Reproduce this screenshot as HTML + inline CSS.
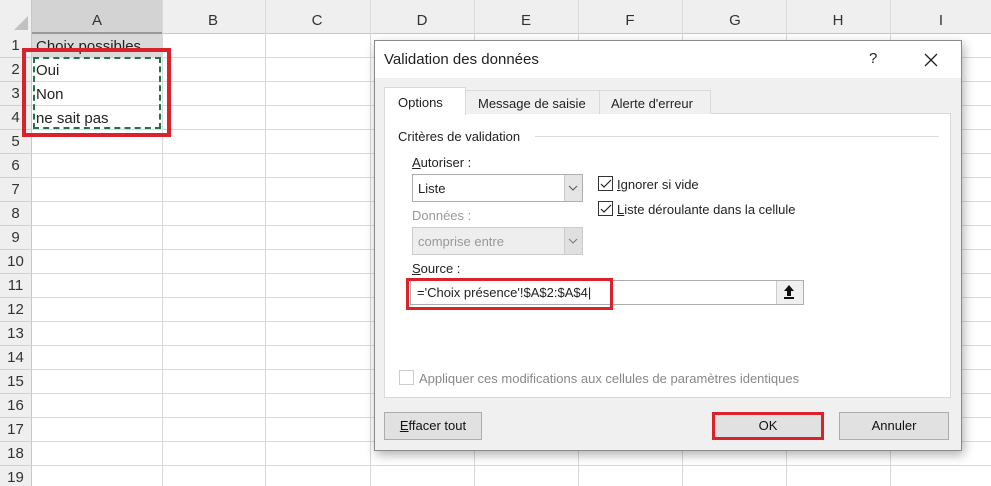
<!DOCTYPE html>
<html><head><meta charset="utf-8"><style>
*{margin:0;padding:0;box-sizing:border-box}
body{width:991px;height:486px;overflow:hidden;background:#fff;font-family:"Liberation Sans",sans-serif;position:relative}
.a{position:absolute}
.hdr{background:#efefef}
.cl{position:absolute;top:0;width:1px;height:486px;background:#d9d9d9}
.ch{position:absolute;top:12px;font-size:15px;color:#333;text-align:center;width:20px}
.rn{position:absolute;left:0;width:31px;text-align:center;font-size:15px;color:#333}
.t{font-size:13px;color:#222;position:absolute;white-space:nowrap}
.btn{position:absolute;background:#e1e1e1;border:1px solid #adadad;font-size:13px;text-align:center;line-height:26px;color:#111}
.cb{position:absolute;width:15px;height:15px;border:1px solid #333;background:#fff}
</style></head><body>
<!-- header -->
<div class="a hdr" style="left:0;top:0;width:991px;height:34px;border-bottom:1px solid #c8c8c8"></div>
<div class="a hdr" style="left:0;top:0;width:32px;height:486px;border-right:1px solid #c8c8c8"></div>
<div class="a" style="left:32px;top:0;width:130px;height:34px;background:#d3d3d3;border-bottom:2px solid #9a9a9a"></div>
<svg class="a" style="left:12px;top:14px" width="18" height="18"><polygon points="16,2 16,16 2,16" fill="#c2c2c2"/></svg>
<!-- rows -->
<div class="a" style="left:32px;top:34px;width:959px;height:452px;background:repeating-linear-gradient(to bottom,transparent 0,transparent 23px,#dadada 23px,#dadada 24px)"></div>
<div class="a" style="left:0;top:34px;width:32px;height:452px;background:repeating-linear-gradient(to bottom,transparent 0,transparent 23px,#d0d0d0 23px,#d0d0d0 24px)"></div>
<div class="cl" style="left:162px"></div><div class="cl" style="left:265px"></div><div class="cl" style="left:370px"></div><div class="cl" style="left:474px"></div><div class="cl" style="left:578px"></div><div class="cl" style="left:682px"></div><div class="cl" style="left:786px"></div><div class="cl" style="left:890px"></div>
<div class="ch" style="left:87px">A</div><div class="ch" style="left:203px">B</div><div class="ch" style="left:307px">C</div><div class="ch" style="left:412px">D</div><div class="ch" style="left:516px">E</div><div class="ch" style="left:620px">F</div><div class="ch" style="left:725px">G</div><div class="ch" style="left:828px">H</div><div class="ch" style="left:931px">I</div>
<div class="a" style="left:32px;top:34px;width:130px;height:23px;background:#d9d9d9"></div>
<div class="rn" style="top:37px">1</div><div class="rn" style="top:61px">2</div><div class="rn" style="top:85px">3</div><div class="rn" style="top:109px">4</div><div class="rn" style="top:133px">5</div><div class="rn" style="top:157px">6</div><div class="rn" style="top:181px">7</div><div class="rn" style="top:205px">8</div><div class="rn" style="top:229px">9</div><div class="rn" style="top:253px">10</div><div class="rn" style="top:277px">11</div><div class="rn" style="top:301px">12</div><div class="rn" style="top:325px">13</div><div class="rn" style="top:349px">14</div><div class="rn" style="top:373px">15</div><div class="rn" style="top:397px">16</div><div class="rn" style="top:421px">17</div><div class="rn" style="top:445px">18</div><div class="rn" style="top:469px">19</div>
<div class="t" style="left:36px;top:38px;font-size:15px">Choix possibles</div>
<div class="t" style="left:36px;top:62px;font-size:15px">Oui</div>
<div class="t" style="left:36px;top:86px;font-size:15px">Non</div>
<div class="t" style="left:36px;top:110px;font-size:15px">ne sait pas</div>
<div class="a" style="left:33px;top:57px;width:128px;height:72px;border:2px dashed #217346"></div>
<div class="a" style="left:22px;top:48px;width:149px;height:89px;border:4px solid #d9222c"></div>
<!-- dialog -->
<div class="a" style="left:374px;top:40px;width:588px;height:411px;background:#f0f0f0;border:1px solid #8a8a8a;box-shadow:2px 4px 10px rgba(0,0,0,.3)">
 <div class="a" style="left:0;top:0;width:586px;height:37px;background:#fff"></div>
 <div class="t" style="left:9px;top:10px;font-size:15px">Validation des données</div>
 <div class="t" style="left:494px;top:9px;font-size:15px">?</div>
 <svg class="a" style="left:549px;top:12px" width="14" height="14"><path d="M1 1L13 13M13 1L1 13" stroke="#222" stroke-width="1.3"/></svg>
 <div class="a" style="left:9px;top:72px;width:567px;height:285px;background:#fff;border:1px solid #d9d9d9"></div>
 <div class="a" style="left:90px;top:49px;width:135px;height:24px;background:#f0f0f0;border:1px solid #d9d9d9;border-bottom:none"></div>
 <div class="a" style="left:224px;top:49px;width:112px;height:24px;background:#f0f0f0;border:1px solid #d9d9d9;border-bottom:none"></div>
 <div class="a" style="left:9px;top:46px;width:82px;height:28px;background:#fff;border:1px solid #d9d9d9;border-bottom:none"></div>
 <div class="t" style="left:23px;top:54px">Options</div>
 <div class="t" style="left:103px;top:55px">Message de saisie</div>
 <div class="t" style="left:236px;top:55px">Alerte d'erreur</div>
 <div class="t" style="left:23px;top:88px">Critères de validation</div>
 <div class="a" style="left:160px;top:95px;width:404px;height:1px;background:#dcdcdc"></div>
 <div class="t" style="left:37px;top:114px"><u>A</u>utoriser :</div>
 <div class="a" style="left:37px;top:133px;width:171px;height:28px;border:1px solid #adadad;background:#fff"><span class="t" style="left:5px;top:6px">Liste</span><div class="a" style="right:0;top:0;width:18px;height:26px;background:#e5e5e5;border-left:1px solid #ccc"></div><svg class="a" style="right:4px;top:10px" width="10" height="6"><path d="M1 1L5 5L9 1" stroke="#555" fill="none"/></svg></div>
 <div class="t" style="left:37px;top:167px;color:#999">Données :</div>
 <div class="a" style="left:37px;top:186px;width:171px;height:28px;border:1px solid #ccc;background:#eee"><span class="t" style="left:5px;top:6px;color:#999">comprise entre</span><div class="a" style="right:0;top:0;width:18px;height:26px;background:#e0e0e0;border-left:1px solid #ccc"></div><svg class="a" style="right:4px;top:10px" width="10" height="6"><path d="M1 1L5 5L9 1" stroke="#777" fill="none"/></svg></div>
 <div class="cb" style="left:223px;top:135px"></div><svg class="a" style="left:225px;top:138px" width="12" height="10"><path d="M1 5L4 8L11 1" stroke="#222" fill="none" stroke-width="1.2"/></svg>
 <div class="t" style="left:242px;top:136px"><u>I</u>gnorer si vide</div>
 <div class="cb" style="left:223px;top:160px"></div><svg class="a" style="left:225px;top:163px" width="12" height="10"><path d="M1 5L4 8L11 1" stroke="#222" fill="none" stroke-width="1.2"/></svg>
 <div class="t" style="left:242px;top:161px"><u>L</u>iste déroulante dans la cellule</div>
 <div class="t" style="left:37px;top:220px"><u>S</u>ource :</div>
 <div class="a" style="left:35px;top:239px;width:394px;height:25px;border:1px solid #adadad;background:#fff"></div>
 <div class="a" style="left:401px;top:240px;width:27px;height:23px;background:#f0f0f0;border-left:1px solid #ccc"></div>
 <svg class="a" style="left:408px;top:243px" width="12" height="16"><path d="M6 1L1 7H4V12H8V7H11Z" fill="#111"/><rect x="1" y="13" width="10" height="2" fill="#111"/></svg>
 <div class="t" style="left:42px;top:244px">='Choix présence'!$A$2:$A$4|</div>
 <div class="a" style="left:31px;top:237px;width:207px;height:32px;border:3px solid #d9222c"></div>
 <div class="cb" style="left:24px;top:329px;border-color:#ccc"></div>
 <div class="t" style="left:44px;top:330px;color:#888">Appliquer ces modifications aux cellules de paramètres identiques</div>
 <div class="btn" style="left:9px;top:371px;width:98px;height:28px"><u>E</u>ffacer tout</div>
 <div class="btn" style="left:337px;top:371px;width:112px;height:28px;border:3px solid #d9222c;line-height:22px">OK</div>
 <div class="btn" style="left:464px;top:371px;width:110px;height:28px">Annuler</div>
</div>
</body></html>
